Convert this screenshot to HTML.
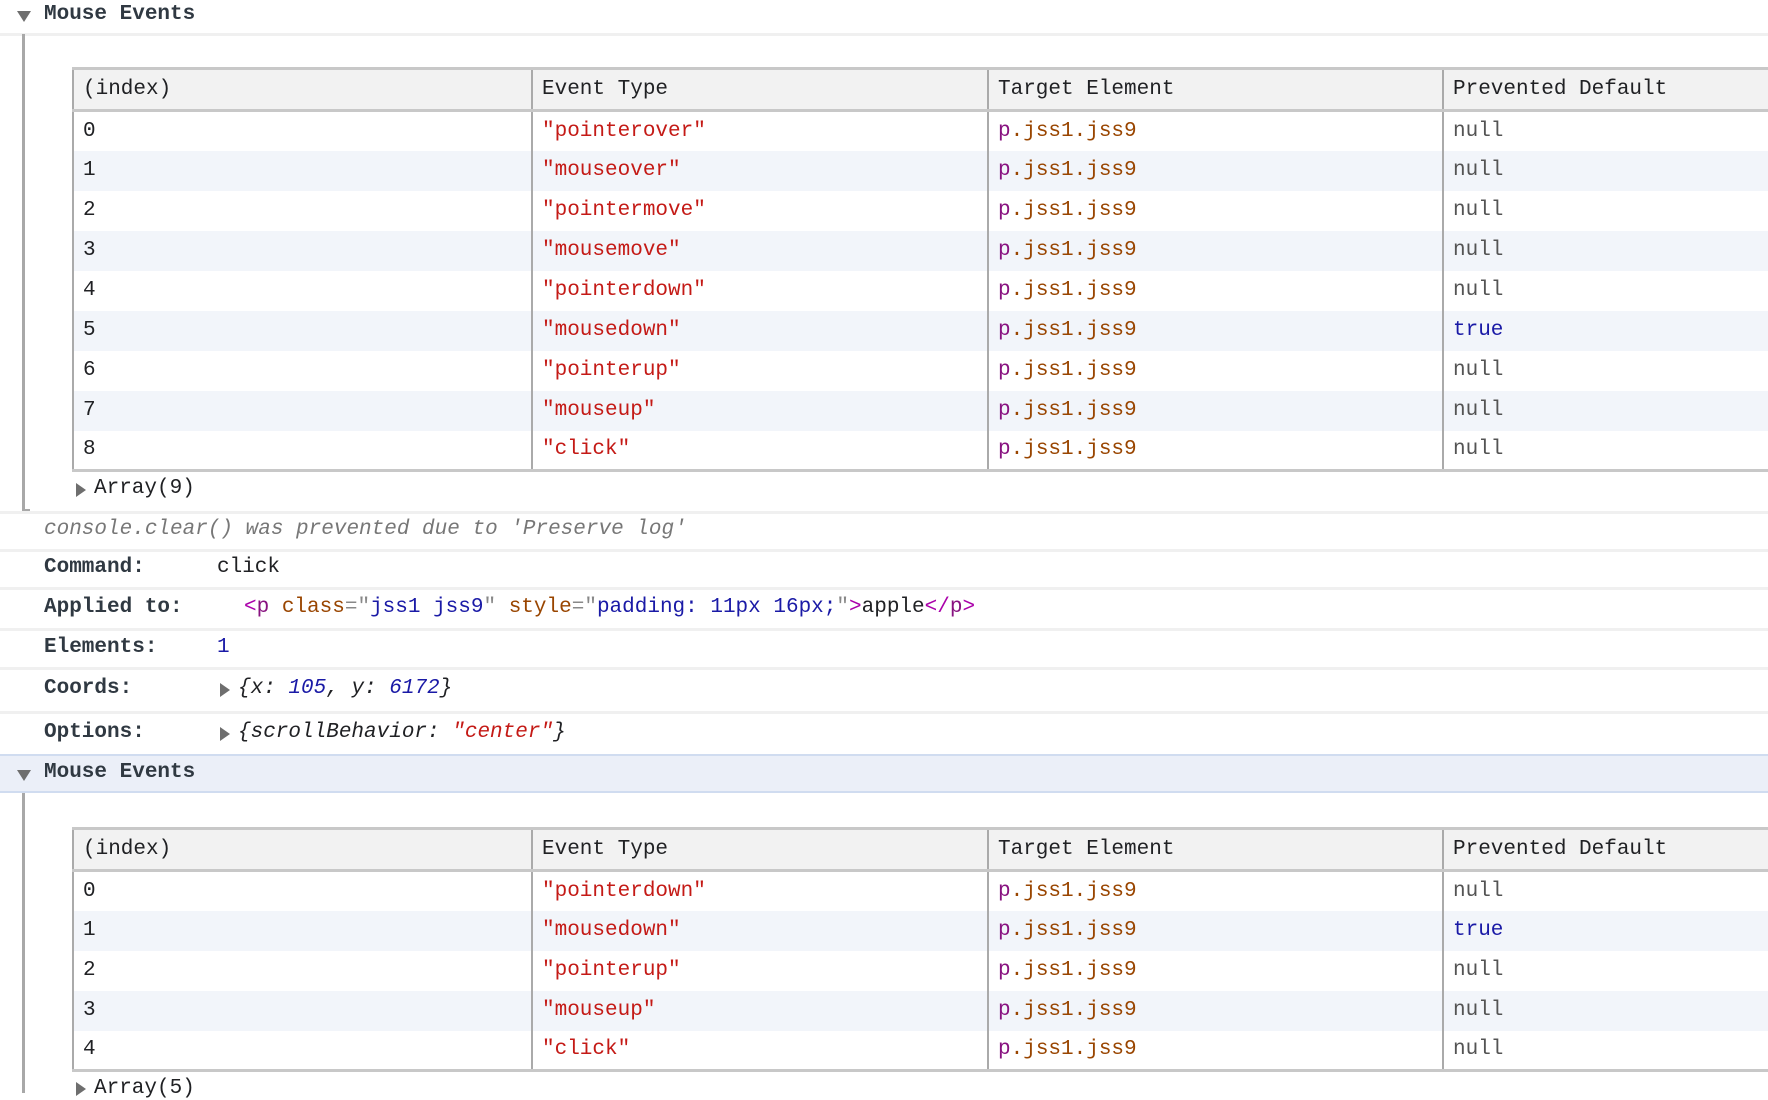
<!DOCTYPE html>
<html><head><meta charset="utf-8"><style>
*{margin:0;padding:0;box-sizing:border-box}
body{width:1768px;height:1084px;overflow:hidden;background:#fff;font-family:"Liberation Mono","DejaVu Sans Mono",monospace;font-size:21px;color:#202124;position:relative}
.a{position:absolute;white-space:pre}
.sep{position:absolute;left:0;width:1768px;height:3px;background:#f0f0f0}
.vl{position:absolute;width:3px;background:#a8a8a8}
.tri{position:absolute;width:0;height:0}
.down{border-left:7px solid transparent;border-right:7px solid transparent;border-top:11px solid #6e6e6e}
.right{border-top:7px solid transparent;border-bottom:7px solid transparent;border-left:10px solid #6e6e6e}
table{position:absolute;left:72px;border-collapse:collapse;width:1720px;table-layout:fixed}
td,th{height:40px;padding:0 0 0 9px;text-align:left;font-weight:normal;border-left:2px solid #aaa;white-space:pre;vertical-align:middle}
th{height:42px;background:#f2f2f2;border-top:3px solid #c8c8c8;border-bottom:3px solid #c8c8c8}
tr:nth-child(even) td{background:#f2f5fa}
tbody tr:last-child td{border-bottom:3px solid #c8c8c8}
.s{color:#c41a16}.p{color:#881280}.b{color:#994500}.n{color:#545454}.t{color:#1a1aa6}
.lab{font-weight:bold;color:#303942}
</style></head><body>
<div class="tri down" style="left:17px;top:11px"></div>
<div class="a lab" style="left:44px;top:3px">Mouse Events</div>
<div class="sep" style="top:33px"></div>
<div class="vl" style="left:22px;top:34px;height:477px"></div>
<div style="position:absolute;left:22px;top:509px;width:8px;height:2px;background:#a8a8a8"></div>
<table style="top:67px">
<colgroup><col style="width:459px"><col style="width:456px"><col style="width:455px"><col></colgroup>
<thead><tr><th>(index)</th><th>Event Type</th><th>Target Element</th><th>Prevented Default</th></tr></thead>
<tbody>
<tr><td>0</td><td class="s">"pointerover"</td><td><span class="p">p</span><span class="b">.jss1.jss9</span></td><td class="n">null</td></tr>
<tr><td>1</td><td class="s">"mouseover"</td><td><span class="p">p</span><span class="b">.jss1.jss9</span></td><td class="n">null</td></tr>
<tr><td>2</td><td class="s">"pointermove"</td><td><span class="p">p</span><span class="b">.jss1.jss9</span></td><td class="n">null</td></tr>
<tr><td>3</td><td class="s">"mousemove"</td><td><span class="p">p</span><span class="b">.jss1.jss9</span></td><td class="n">null</td></tr>
<tr><td>4</td><td class="s">"pointerdown"</td><td><span class="p">p</span><span class="b">.jss1.jss9</span></td><td class="n">null</td></tr>
<tr><td>5</td><td class="s">"mousedown"</td><td><span class="p">p</span><span class="b">.jss1.jss9</span></td><td class="t">true</td></tr>
<tr><td>6</td><td class="s">"pointerup"</td><td><span class="p">p</span><span class="b">.jss1.jss9</span></td><td class="n">null</td></tr>
<tr><td>7</td><td class="s">"mouseup"</td><td><span class="p">p</span><span class="b">.jss1.jss9</span></td><td class="n">null</td></tr>
<tr><td>8</td><td class="s">"click"</td><td><span class="p">p</span><span class="b">.jss1.jss9</span></td><td class="n">null</td></tr>
</tbody></table>
<div class="tri right" style="left:76px;top:483px"></div>
<div class="a" style="left:94px;top:477px">Array(9)</div>
<div class="sep" style="top:511px"></div>
<div class="a" style="left:44px;top:518px;color:#777;font-style:italic">console.clear() was prevented due to 'Preserve log'</div>
<div class="sep" style="top:549px"></div>
<div class="a lab" style="left:44px;top:556px">Command:</div>
<div class="a" style="left:217px;top:556px">click</div>
<div class="sep" style="top:587px"></div>
<div class="a lab" style="left:44px;top:596px">Applied to:</div>
<div class="a" style="left:244px;top:596px"><span style="color:#a0a">&lt;</span><span class="p">p</span> <span class="b">class</span><span style="color:#888">="</span><span class="t">jss1 jss9</span><span style="color:#888">"</span> <span class="b">style</span><span style="color:#888">="</span><span class="t">padding: 11px 16px;</span><span style="color:#888">"</span><span style="color:#a0a">&gt;</span>apple<span style="color:#a0a">&lt;/</span><span class="p">p</span><span style="color:#a0a">&gt;</span></div>
<div class="sep" style="top:628px"></div>
<div class="a lab" style="left:44px;top:636px">Elements:</div>
<div class="a t" style="left:217px;top:636px">1</div>
<div class="sep" style="top:667px"></div>
<div class="a lab" style="left:44px;top:677px">Coords:</div>
<div class="tri right" style="left:220px;top:683px"></div>
<div class="a" style="left:238px;top:677px;font-style:italic">{x: <span class="t">105</span>, y: <span class="t">6172</span>}</div>
<div class="sep" style="top:711px"></div>
<div class="a lab" style="left:44px;top:721px">Options:</div>
<div class="tri right" style="left:220px;top:727px"></div>
<div class="a" style="left:238px;top:721px;font-style:italic">{scrollBehavior: <span class="s">"center"</span>}</div>
<div style="position:absolute;left:0;top:754px;width:1768px;height:39px;background:#ebeff8;border-top:2px solid #d0dcf0;border-bottom:2px solid #d0dcf0"></div>
<div class="tri down" style="left:17px;top:770px"></div>
<div class="a lab" style="left:44px;top:761px">Mouse Events</div>
<div class="vl" style="left:22px;top:793px;height:300px"></div>
<table style="top:827px">
<colgroup><col style="width:459px"><col style="width:456px"><col style="width:455px"><col></colgroup>
<thead><tr><th>(index)</th><th>Event Type</th><th>Target Element</th><th>Prevented Default</th></tr></thead>
<tbody>
<tr><td>0</td><td class="s">"pointerdown"</td><td><span class="p">p</span><span class="b">.jss1.jss9</span></td><td class="n">null</td></tr>
<tr><td>1</td><td class="s">"mousedown"</td><td><span class="p">p</span><span class="b">.jss1.jss9</span></td><td class="t">true</td></tr>
<tr><td>2</td><td class="s">"pointerup"</td><td><span class="p">p</span><span class="b">.jss1.jss9</span></td><td class="n">null</td></tr>
<tr><td>3</td><td class="s">"mouseup"</td><td><span class="p">p</span><span class="b">.jss1.jss9</span></td><td class="n">null</td></tr>
<tr><td>4</td><td class="s">"click"</td><td><span class="p">p</span><span class="b">.jss1.jss9</span></td><td class="n">null</td></tr>
</tbody></table>
<div class="tri right" style="left:76px;top:1082px"></div>
<div class="a" style="left:94px;top:1077px">Array(5)</div>
</body></html>
